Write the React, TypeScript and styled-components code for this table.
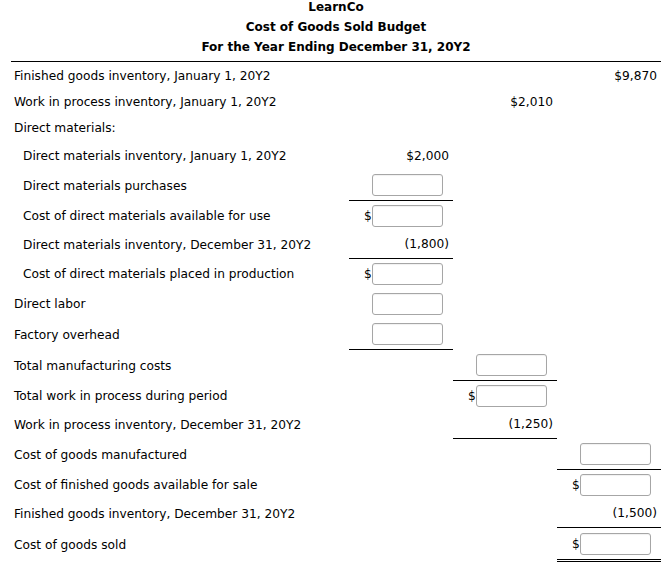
import styled, { createGlobalStyle } from "styled-components";

const GlobalStyle = createGlobalStyle`
  body {
    margin: 0;
    background: #fff;
    color: #000;
    font-family: "DejaVu Sans", Verdana, sans-serif;
    font-size: 12.2px;
  }
`;

const Page = styled.div`
  width: 669px;
  padding-left: 11px;
  box-sizing: border-box;
`;

const Header = styled.div`
  width: 650px;
  display: flex;
  flex-direction: column;
  align-items: center;
  gap: 7px;
  padding-top: 1px;
  padding-bottom: 7px;
  border-bottom: 1px solid #000;
  font-weight: bold;
  font-size: 12px;
  line-height: 13px;
`;

const Table = styled.div`
  width: 650px;
  display: flex;
  flex-direction: column;
  padding-top: 1px;
`;

const Row = styled.div<{ $h: number }>`
  display: grid;
  grid-template-columns: 338px 104px 104px 104px;
  height: ${(p) => p.$h}px;
`;

const Label = styled.div<{ $indent?: boolean }>`
  display: flex;
  align-items: center;
  padding-left: ${(p) => (p.$indent ? 12 : 3)}px;
  white-space: nowrap;
`;

const Cell = styled.div<{ $rule?: "single" | "double" }>`
  display: flex;
  align-items: center;
  justify-content: flex-end;
  box-sizing: border-box;
  border-bottom: ${(p) =>
    p.$rule === "double" ? "3px double #000" : p.$rule === "single" ? "1px solid #000" : "none"};
`;

const Amount = styled.span`
  padding-right: 4px;
`;

const Field = styled.div`
  display: flex;
  align-items: center;
  padding-right: 10px;
`;

const Dollar = styled.span<{ $show: boolean }>`
  width: 8px;
  visibility: ${(p) => (p.$show ? "visible" : "hidden")};
`;

const Input = styled.input`
  width: 71px;
  height: 22px;
  box-sizing: border-box;
  border: 1px solid #a6a6a6;
  border-radius: 3px;
  background: #fff;
  box-shadow: inset 0 1px 1px rgba(0, 0, 0, 0.06);
  padding: 0 4px;
  font: inherit;
`;

type Val = { text?: string; input?: boolean; dollar?: boolean } | null;

type Line = {
  label: string;
  indent?: boolean;
  h: number;
  cols: [Val, Val, Val];
  rule?: { col: number; kind: "single" | "double" };
};

const rows: Line[] = [
  { label: "Finished goods inventory, January 1, 20Y2", h: 26, cols: [null, null, { text: "$9,870" }] },
  { label: "Work in process inventory, January 1, 20Y2", h: 26, cols: [null, { text: "$2,010" }, null] },
  { label: "Direct materials:", h: 26, cols: [null, null, null] },
  { label: "Direct materials inventory, January 1, 20Y2", indent: true, h: 29, cols: [{ text: "$2,000" }, null, null] },
  { label: "Direct materials purchases", indent: true, h: 31, cols: [{ input: true }, null, null], rule: { col: 0, kind: "single" } },
  { label: "Cost of direct materials available for use", indent: true, h: 29, cols: [{ input: true, dollar: true }, null, null] },
  { label: "Direct materials inventory, December 31, 20Y2", indent: true, h: 29, cols: [{ text: "(1,800)" }, null, null], rule: { col: 0, kind: "single" } },
  { label: "Cost of direct materials placed in production", indent: true, h: 30, cols: [{ input: true, dollar: true }, null, null] },
  { label: "Direct labor", h: 30, cols: [{ input: true }, null, null] },
  { label: "Factory overhead", h: 31, cols: [{ input: true }, null, null], rule: { col: 0, kind: "single" } },
  { label: "Total manufacturing costs", h: 31, cols: [null, { input: true }, null], rule: { col: 1, kind: "single" } },
  { label: "Total work in process during period", h: 29, cols: [null, { input: true, dollar: true }, null] },
  { label: "Work in process inventory, December 31, 20Y2", h: 29, cols: [null, { text: "(1,250)" }, null], rule: { col: 1, kind: "single" } },
  { label: "Cost of goods manufactured", h: 31, cols: [null, null, { input: true }], rule: { col: 2, kind: "single" } },
  { label: "Cost of finished goods available for sale", h: 29, cols: [null, null, { input: true, dollar: true }] },
  { label: "Finished goods inventory, December 31, 20Y2", h: 29, cols: [null, null, { text: "(1,500)" }], rule: { col: 2, kind: "single" } },
  { label: "Cost of goods sold", h: 34, cols: [null, null, { input: true, dollar: true }], rule: { col: 2, kind: "double" } },
];

export default function App() {
  return (
    <>
      <GlobalStyle />
      <Page>
        <Header>
          <div>LearnCo</div>
          <div>Cost of Goods Sold Budget</div>
          <div>For the Year Ending December 31, 20Y2</div>
        </Header>
        <Table>
          {rows.map((r, i) => (
            <Row key={i} $h={r.h}>
              <Label $indent={r.indent}>{r.label}</Label>
              {r.cols.map((c, j) => (
                <Cell key={j} $rule={r.rule && r.rule.col === j ? r.rule.kind : undefined}>
                  {c && c.text && <Amount>{c.text}</Amount>}
                  {c && c.input && (
                    <Field>
                      <Dollar $show={!!c.dollar}>$</Dollar>
                      <Input type="text" />
                    </Field>
                  )}
                </Cell>
              ))}
            </Row>
          ))}
        </Table>
      </Page>
    </>
  );
}
